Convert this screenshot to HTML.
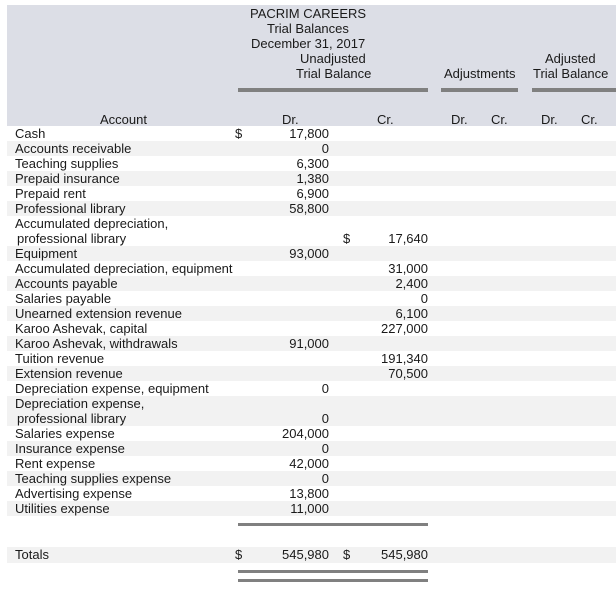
<!DOCTYPE html>
<html><head><style>
body{margin:0;width:616px;height:590px;background:#fff;font-family:"Liberation Sans",Arial,sans-serif;font-size:13px;color:#1a1a1a;position:relative;overflow:hidden}
.a{position:absolute;white-space:nowrap;line-height:15px}
.hdr{position:absolute;left:7px;top:5px;width:609px;height:121px;background:#dcdee6}
.ln{position:absolute;height:4px;background:#808080}
.r{position:absolute;left:7px;width:609px;height:15px}
.g{background:#f2f2f2}
.r div{position:absolute;white-space:nowrap;line-height:15px;top:0}
.n{left:8px}
.d{left:228px}
.dr{right:287px;text-align:right}
.c{left:336px}
.cr{right:188px;text-align:right}
</style></head><body>
<div class="hdr"></div>
<div class="a" style="left:250px;top:6px">PACRIM CAREERS</div>
<div class="a" style="left:267px;top:21px">Trial Balances</div>
<div class="a" style="left:251px;top:36px">December 31, 2017</div>
<div class="a" style="left:300px;top:51px">Unadjusted</div>
<div class="a" style="left:296px;top:66px">Trial Balance</div>
<div class="a" style="left:545px;top:51px">Adjusted</div>
<div class="a" style="left:444px;top:66px">Adjustments</div>
<div class="a" style="left:533px;top:66px">Trial Balance</div>
<div class="ln" style="left:238px;top:88px;width:190px"></div>
<div class="ln" style="left:441px;top:88px;width:77px"></div>
<div class="ln" style="left:532px;top:88px;width:84px"></div>
<div class="a" style="left:100px;top:112px">Account</div>
<div class="a" style="left:282px;top:112px">Dr.</div>
<div class="a" style="left:377px;top:112px">Cr.</div>
<div class="a" style="left:451px;top:112px">Dr.</div>
<div class="a" style="left:491px;top:112px">Cr.</div>
<div class="a" style="left:541px;top:112px">Dr.</div>
<div class="a" style="left:581px;top:112px">Cr.</div>

<div class="r" style="top:126px"><div class="n">Cash</div><div class="d">$</div><div class="dr">17,800</div></div>
<div class="r g" style="top:141px"><div class="n">Accounts receivable</div><div class="dr">0</div></div>
<div class="r" style="top:156px"><div class="n">Teaching supplies</div><div class="dr">6,300</div></div>
<div class="r g" style="top:171px"><div class="n">Prepaid insurance</div><div class="dr">1,380</div></div>
<div class="r" style="top:186px"><div class="n">Prepaid rent</div><div class="dr">6,900</div></div>
<div class="r g" style="top:201px"><div class="n">Professional library</div><div class="dr">58,800</div></div>
<div class="r" style="top:216px;height:30px"><div class="n">Accumulated depreciation,</div><div class="n" style="top:15px;left:10px">professional library</div><div class="c" style="top:15px">$</div><div class="cr" style="top:15px">17,640</div></div>
<div class="r g" style="top:246px"><div class="n">Equipment</div><div class="dr">93,000</div></div>
<div class="r" style="top:261px"><div class="n">Accumulated depreciation, equipment</div><div class="cr">31,000</div></div>
<div class="r g" style="top:276px"><div class="n">Accounts payable</div><div class="cr">2,400</div></div>
<div class="r" style="top:291px"><div class="n">Salaries payable</div><div class="cr">0</div></div>
<div class="r g" style="top:306px"><div class="n">Unearned extension revenue</div><div class="cr">6,100</div></div>
<div class="r" style="top:321px"><div class="n">Karoo Ashevak, capital</div><div class="cr">227,000</div></div>
<div class="r g" style="top:336px"><div class="n">Karoo Ashevak, withdrawals</div><div class="dr">91,000</div></div>
<div class="r" style="top:351px"><div class="n">Tuition revenue</div><div class="cr">191,340</div></div>
<div class="r g" style="top:366px"><div class="n">Extension revenue</div><div class="cr">70,500</div></div>
<div class="r" style="top:381px"><div class="n">Depreciation expense, equipment</div><div class="dr">0</div></div>
<div class="r g" style="top:396px;height:30px"><div class="n">Depreciation expense,</div><div class="n" style="top:15px;left:10px">professional library</div><div class="dr" style="top:15px">0</div></div>
<div class="r" style="top:426px"><div class="n">Salaries expense</div><div class="dr">204,000</div></div>
<div class="r g" style="top:441px"><div class="n">Insurance expense</div><div class="dr">0</div></div>
<div class="r" style="top:456px"><div class="n">Rent expense</div><div class="dr">42,000</div></div>
<div class="r g" style="top:471px"><div class="n">Teaching supplies expense</div><div class="dr">0</div></div>
<div class="r" style="top:486px"><div class="n">Advertising expense</div><div class="dr">13,800</div></div>
<div class="r g" style="top:501px"><div class="n">Utilities expense</div><div class="dr">11,000</div></div>
<div class="ln" style="left:238px;top:523px;width:190px;height:3px"></div>
<div class="r g" style="top:547px;height:16px"><div class="n">Totals</div><div class="d">$</div><div class="dr">545,980</div><div class="c">$</div><div class="cr">545,980</div></div>
<div class="ln" style="left:238px;top:570px;width:190px;height:3px"></div>
<div class="ln" style="left:238px;top:579px;width:190px;height:3px"></div>
</body></html>
